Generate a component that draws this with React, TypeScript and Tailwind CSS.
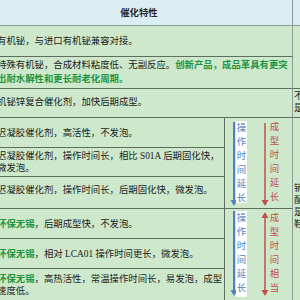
import React from "react";

const G = ({ children }: { children: React.ReactNode }) => (
  <span className="font-bold text-[#1f9440]">{children}</span>
);

function VText({ chars, className }: { chars: string; className: string }) {
  return (
    <div className={`flex flex-col items-center ${className}`}>
      {chars.split("").map((c, i) => (
        <span key={i} className="h-[14px] leading-[14px]">
          {c}
        </span>
      ))}
    </div>
  );
}

export default function App() {
  return (
    <div className="w-[300px] h-[300px] overflow-hidden bg-[#cde8cb] font-['Liberation_Serif','Noto_Sans_CJK_SC',serif] text-[9.4px] leading-[12px] text-[#1c1c1c]">
      <div className="-ml-[14px] grid w-[330px] grid-cols-[239px_68px_23px] grid-rows-[26px_31px_32px_29px_30px_29px_32px_30px_30px_40px]">
        {/* header */}
        <div className="col-start-1 col-span-2 row-start-1 flex items-center justify-center border-b border-r border-b-[#8d9b9b] border-r-[#8d9b9b] bg-[#dbeef4] font-bold text-[#2a2a2a]">
          <span>催化特性</span>
        </div>
        <div className="col-start-3 row-start-1 border-b border-[#8d9b9b] bg-[#dbeef4]" />

        {/* row 1 */}
        <div className="col-start-1 col-span-2 row-start-2 flex items-center whitespace-nowrap border-b border-r border-b-[#5f6f5f] border-r-[#8d9b9b] pl-[11px]">
          有机铋，与进口有机铋兼容对接。
        </div>
        {/* row 2 */}
        <div className="col-start-1 col-span-2 row-start-3 flex flex-col justify-center whitespace-nowrap border-b border-r border-b-[#5f6f5f] border-r-[#8d9b9b] pb-[2px] pl-[11px] leading-[14px]">
          <div>
            特殊有机铋，合成材料粘度低、无副反应。<G>创新产品，成品革具有更突</G>
          </div>
          <div>
            <G>出耐水解性和更长耐老化周期。</G>
          </div>
        </div>
        {/* row 3 */}
        <div className="col-start-1 col-span-2 row-start-4 flex items-center whitespace-nowrap border-b border-r border-b-[#5f6f5f] border-r-[#8d9b9b] pb-[3px] pl-[11px]">
          机铋锌复合催化剂，加快后期成型。
        </div>

        {/* right col upper */}
        <div className="col-start-3 row-start-2 row-span-2 border-b border-[#5f6f5f]" />
        <div className="col-start-3 row-start-4 flex flex-col justify-center whitespace-nowrap border-b border-[#5f6f5f] pb-[3px] pl-[1px]">
          <span>不需</span>
          <span>是的</span>
        </div>

        {/* rows 4-6 */}
        <div className="col-start-1 row-start-5 flex items-center whitespace-nowrap border-b border-r border-[#5f6f5f] pl-[11px]">
          迟凝胶催化剂，高活性，不发泡。
        </div>
        <div className="col-start-1 row-start-6 flex flex-col justify-center whitespace-nowrap border-b border-r border-[#5f6f5f] pl-[11px]">
          <div>迟凝胶催化剂，操作时间长，相比 S01A 后期固化快，</div>
          <div>微发泡。</div>
        </div>
        <div className="col-start-1 row-start-7 flex items-center whitespace-nowrap border-b border-r border-[#5f6f5f] pb-[6px] pl-[11px]">
          迟凝胶催化剂，操作时间长，后期固化快，微发泡。
        </div>

        {/* arrow cell 1 */}
        <div className="relative col-start-2 row-start-5 row-span-3 border-b border-r border-b-[#5f6f5f] border-r-[#8d9b9b]">
          <svg className="absolute left-0 top-0" width="67" height="91">
            <line x1="9" y1="4" x2="9" y2="83" stroke="#4f81bd" strokeWidth="2" />
            <polygon points="5.5,82 12.5,82 9,88" fill="#4f81bd" />
            <line x1="40" y1="5" x2="40" y2="83" stroke="#c0504d" strokeWidth="1.5" />
            <polygon points="36.5,82 43.5,82 40,88" fill="#c0504d" />
          </svg>
          <div className="absolute left-[11px] top-[3px] h-[82px] w-[11px] bg-white">
            <VText chars="操作时间延长" className="text-[#4f81bd]" />
          </div>
          <div className="absolute left-[44px] top-[2px] w-[11px]">
            <VText chars="成型时间延长" className="text-[#c0504d]" />
          </div>
        </div>

        {/* rows 7-9 */}
        <div className="col-start-1 row-start-8 flex items-center whitespace-nowrap border-b border-r border-[#5f6f5f] pl-[11px]">
          <span>
            <G>环保无锡</G>，后期成型快，不发泡。
          </span>
        </div>
        <div className="col-start-1 row-start-9 flex items-center whitespace-nowrap border-b border-r border-[#5f6f5f] pl-[11px]">
          <span>
            <G>环保无锡</G>，相对 LCA01 操作时间更长，微发泡。
          </span>
        </div>
        <div className="col-start-1 row-start-10 flex flex-col whitespace-nowrap border-r border-[#5f6f5f] pt-[4px] pl-[11px]">
          <div>
            <G>环保无锡</G>，高热活性，常温操作时间长，易发泡，成型
          </div>
          <div>速度低。</div>
        </div>

        {/* arrow cell 2 */}
        <div className="relative col-start-2 row-start-8 row-span-3 border-r border-[#8d9b9b]">
          <svg className="absolute left-0 top-0" width="67" height="100">
            <line x1="9" y1="2" x2="9" y2="82" stroke="#4f81bd" strokeWidth="2" />
            <polygon points="5.5,81 12.5,81 9,87" fill="#4f81bd" />
            <line x1="40" y1="8" x2="40" y2="82" stroke="#c0504d" strokeWidth="1.5" />
            <polygon points="36.5,9 43.5,9 40,3" fill="#c0504d" />
            <polygon points="36.5,81 43.5,81 40,87" fill="#c0504d" />
          </svg>
          <div className="absolute left-[11px] top-[2px] h-[86px] w-[11px] bg-white">
            <VText chars="操作时间延长" className="text-[#4f81bd]" />
          </div>
          <div className="absolute left-[44px] top-[2px] w-[11px]">
            <VText chars="成型时间相当" className="text-[#c0504d]" />
          </div>
        </div>

        {/* right col lower */}
        <div className="col-start-3 row-start-5 row-span-6 flex flex-col whitespace-nowrap pt-[64px] pl-[1px]">
          <span>销售</span>
          <span>配方</span>
          <span>是否</span>
          <span>鞋材</span>
        </div>
      </div>
    </div>
  );
}
